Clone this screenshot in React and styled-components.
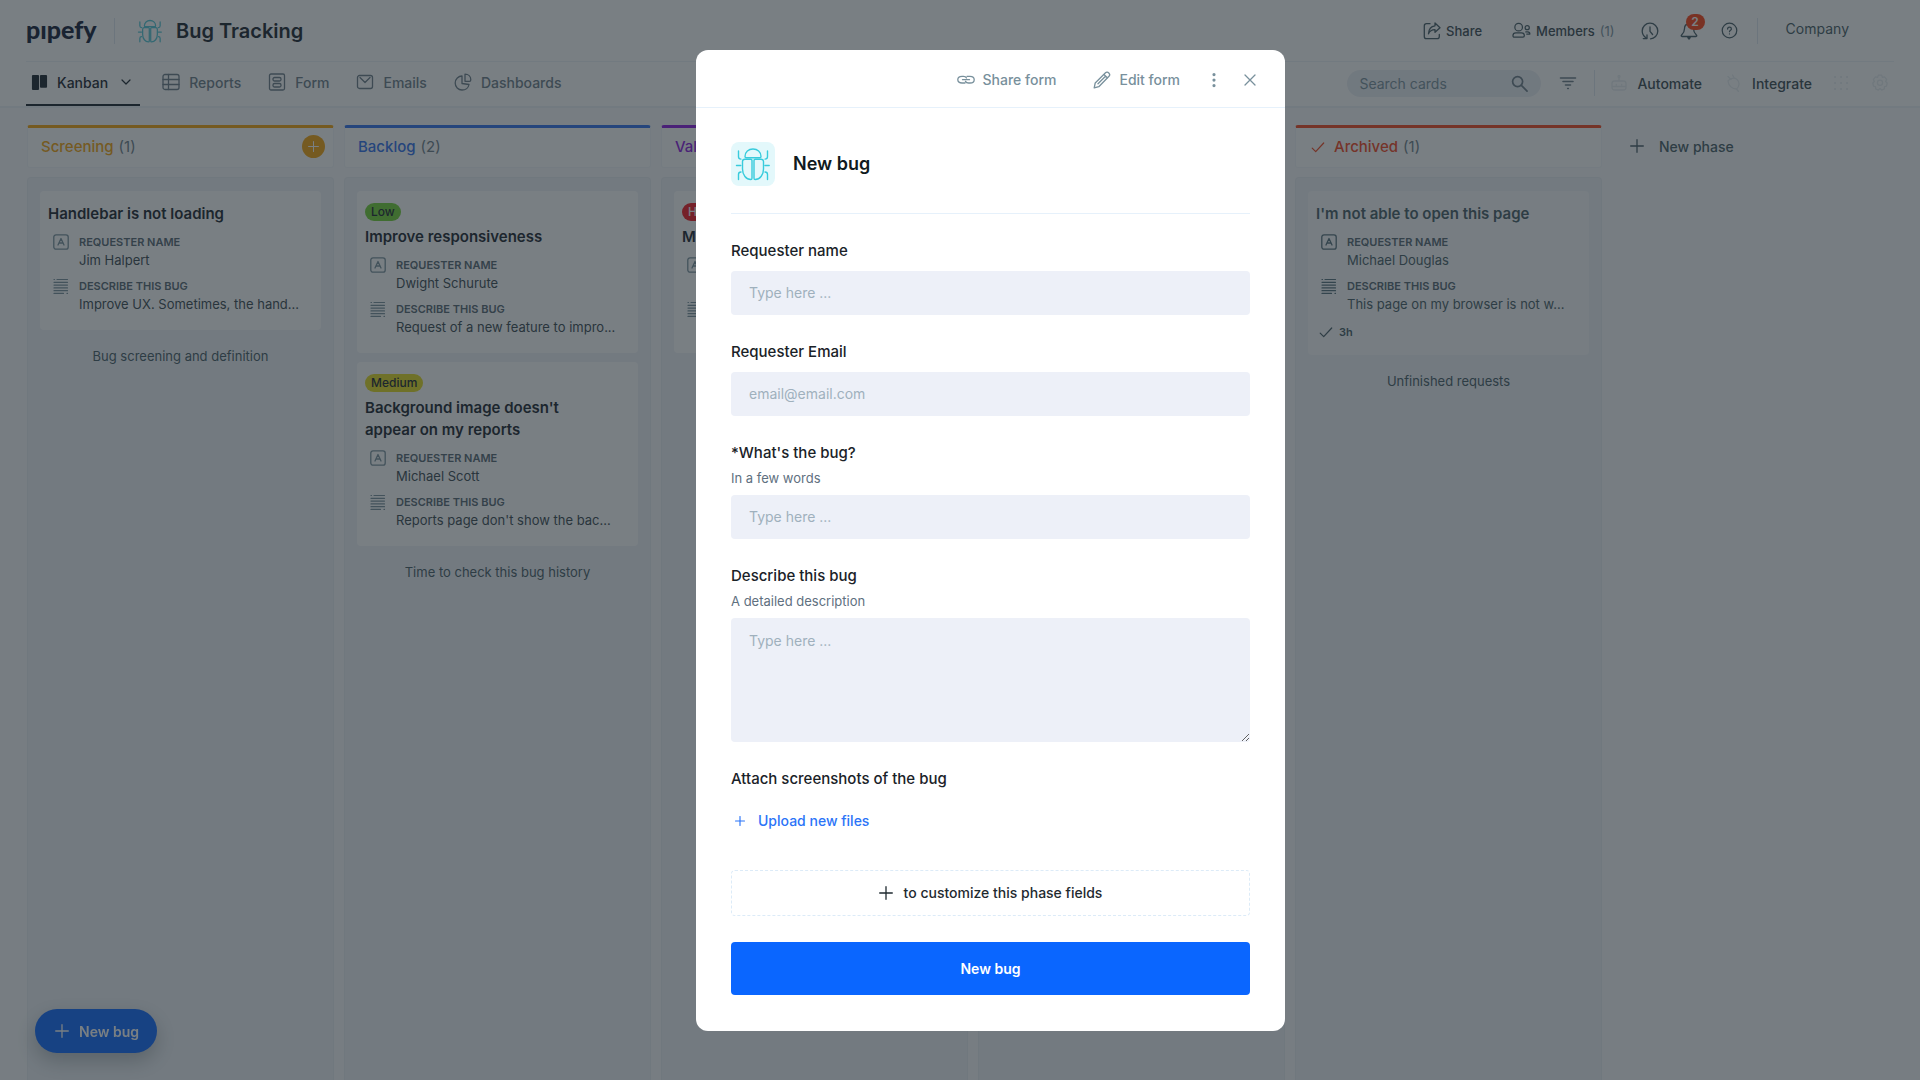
import React from 'react';
import styled, { createGlobalStyle, ThemeProvider } from 'styled-components';

const theme = {
    fontFamily: '"Inter", sans-serif',
    ink: '#17212b',
    text: '#37474f',
    slate: '#455a64',
    muted: '#6b7c88',
    line: '#eef3f8',
    blue: '#0a66ff'
};

const GlobalStyle = createGlobalStyle`
    * {
        box-sizing: border-box;
    }

    body {
        margin: 0;
        overflow: hidden;
        font-family: ${theme.fontFamily};
        color: ${theme.text};
        background: #fafbfd;
    }

    button, input, textarea {
        font-family: inherit;
        border: 0;
        margin: 0;
        padding: 0;
        background: none;
    }

    button {
        cursor: pointer;
        color: inherit;
    }
`;

/* icons */

const Svg = styled.svg`
    display: block;
    flex: none;
    fill: none;
    stroke: currentColor;
    stroke-linecap: round;
    stroke-linejoin: round;
`;

const Icon = ({ size = 18, box = 18, stroke = 1.3, children }) => (
    <Svg width={size} height={size} viewBox={`0 0 ${box} ${box}`} strokeWidth={stroke} aria-hidden="true">
        {children}
    </Svg>
);

const BugIcon = ({ size, stroke }) => (
    <Icon size={size} box={40} stroke={stroke}>
        <path d="M12 12.500c0-4.600 3.600-7.500 8-7.500s8 2.900 8 7.500c0 .9-.5 1.300-1.300 1.300H13.300c-.8 0-1.300-.4-1.300-1.300z" />
        <path d="M19 16.500c0-.8-.5-1.300-1.300-1.300h-5.900c-1.400 0-2.300.8-2.300 2.200v7.600c0 6 3.700 10.500 8.300 10.500.8 0 1.200-.5 1.200-1.300z" />
        <path d="M21 16.500c0-.8.5-1.300 1.300-1.300h5.900c1.400 0 2.300.8 2.300 2.200v7.600c0 6-3.700 10.500-8.300 10.500-.8 0-1.200-.5-1.200-1.300z" />
        <path d="M5.500 7v5.500c0 1.900.8 2.600 2.500 2.600M34.500 7v5.500c0 1.900-.8 2.600-2.500 2.600M3.500 21.500h4.300M36.200 21.500h-4.300M5.500 35.500v-4.900c0-1.900.8-2.600 2.500-2.600M34.500 35.500v-4.900c0-1.900-.8-2.600-2.500-2.600" />
    </Icon>
);

const PlusIcon = ({ size, stroke = 1.3 }) => (
    <Icon size={size} box={14} stroke={stroke}>
        <path d="M7 .7v12.600M.7 7h12.600" />
    </Icon>
);

const CheckIcon = () => (
    <Icon size={14} box={14} stroke={1.2}>
        <path d="M1.200 8.200l3.500 3.500L12.700 3" />
    </Icon>
);

const KanbanIcon = () => (
    <Icon size={17}>
        <rect x="1" y="1" width="7.500" height="16" rx="1" fill="currentColor" stroke="none" />
        <rect x="9.500" y="1" width="7.500" height="13.500" rx="1" fill="currentColor" stroke="none" />
    </Icon>
);

const ReportsIcon = () => (
    <Icon>
        <rect x="1" y="1.500" width="16" height="15" rx="2" />
        <path d="M6.500 1.500v15M1 6.500h16M1 11.500h16" />
    </Icon>
);

const FormIcon = () => (
    <Icon>
        <rect x="1.500" y="1" width="15" height="16" rx="1.500" />
        <rect x="5" y="4.500" width="8" height="3.500" rx="1.500" />
        <rect x="5" y="10.500" width="8" height="3.500" rx="1.500" />
    </Icon>
);

const MailIcon = () => (
    <Icon>
        <rect x="1.500" y="2.500" width="15" height="13" rx="2" />
        <path d="M4 4.500l5 5 5-5" />
    </Icon>
);

const PieIcon = () => (
    <Icon>
        <path d="M8 3C4.500 3 1.200 5.800 1.200 10c0 4 3 7 6.800 7 3.700 0 6.500-2.500 7-5.500L8 10.500z" />
        <path d="M11 8.300V1.200c3.300 0 5.800 2.300 5.800 5.500 0 1.100-.4 1.600-1.300 1.600z" />
    </Icon>
);

const ChevronIcon = () => (
    <Icon size={10} box={10} stroke={1.2}>
        <path d="M1 3l4 4 4-4" />
    </Icon>
);

const ShareIcon = () => (
    <Icon>
        <path d="M7 1.700H3.500c-1.300 0-2.200.9-2.200 2.200v10.600c0 1.300.9 2.200 2.200 2.200h10.600c1.300 0 2.200-.9 2.200-2.200v-2" />
        <path d="M12 1l5 4.700-5 4.600V7.700c-3.600 0-5.300 1.200-6.500 4.100.2-4.700 2.500-7.600 6.500-8z" />
    </Icon>
);

const MembersIcon = () => (
    <Icon size={19} box={20}>
        <circle cx="7" cy="6.500" r="4" />
        <path d="M1 15.500c0-1.900 1.200-3 3-3h6c1.800 0 3 1.100 3 3 0 1-.5 1.500-1.500 1.500h-9C1.500 17 1 16.500 1 15.500z" />
        <circle cx="16" cy="7" r="2.200" />
        <path d="M14.500 11.500h2c1.400 0 2.300.8 2.300 2.300h-3.300" />
    </Icon>
);

const ClockIcon = () => (
    <Icon>
        <path d="M5.500 16C3 14.700 1.200 12.200 1.200 9c0-4.300 3.500-7.800 7.800-7.800s7.800 3.500 7.800 7.800-3.500 7.800-7.300 7.800" />
        <path d="M6 13v3.600H2.300M9 5v4.300l2.600 3.200" />
    </Icon>
);

const BellIcon = () => (
    <Icon>
        <path d="M9 2c-2.800 0-4.500 2-4.500 4.700 0 3.600-1.500 5-3 6.500-.6.700-.3 1.300.5 1.300h14c.8 0 1.100-.6.500-1.300-1.500-1.500-3-2.900-3-6.500C13.500 4 11.800 2 9 2z" />
        <path d="M7.800 15.500h2.400L9 17z" fill="currentColor" />
    </Icon>
);

const HelpIcon = () => (
    <Icon size={17}>
        <circle cx="9" cy="9" r="7.700" />
        <path d="M7 7.500c0-1.200.9-2 2-2s2 .8 2 1.800c0 1.400-2 1.500-2 3M9 12.600v.1" />
    </Icon>
);

const SearchIcon = () => (
    <Icon size={17} stroke={1.8}>
        <circle cx="7" cy="7" r="5.300" />
        <path d="M11 11l6 6" />
    </Icon>
);

const FilterIcon = () => (
    <Icon stroke={1.6}>
        <path d="M1.500 4h15M4 7.500h10M6.500 11h5M8.700 14.500h.6" />
    </Icon>
);

const RobotIcon = () => (
    <Icon>
        <path d="M4.500 7h9c1.500 0 2.500 1 2.500 2.500v4c0 1.500-1 2.500-2.500 2.500h-9C3 16 2 15 2 13.500v-4C2 8 3 7 4.500 7zM9 7V3M6.300 10.500v.5M11.700 10.500v.5M2 12.500h14" />
        <circle cx="9" cy="2.500" r="1" />
    </Icon>
);

const PlugIcon = () => (
    <Icon>
        <path d="M3 2.500l3 3M7.500 1L9 3.500M3 7c2-2.500 6-4 9-1.500 3 2.600 2.600 7-.5 9.500C7.500 15 3.500 12 3 7zM11.500 15l2 2.500" />
    </Icon>
);

const DotsGridIcon = () => (
    <Icon stroke={2}>
        {[3, 9, 15].map(y => <path key={y} d={`M3 ${y}h.1M9 ${y}h.1M15 ${y}h.1`} />)}
    </Icon>
);

const GearIcon = () => (
    <Icon>
        <path d="M7.300 1.200h3.400l.6 2.200 2.200-.5 2.100 2.500-1 2.200 1.600 1.400-.7 3.200-2 .4-.2 2.300-2.600 1.200L9 14.600l-1.700 1.500-2.600-1.200-.2-2.300-2-.4-.7-3.200 1.600-1.400-1-2.200 2.100-2.500 2.200.5z" />
        <circle cx="9" cy="8.700" r="2.600" />
    </Icon>
);

const LinkIcon = () => (
    <Icon>
        <path d="M8 12H5C2.500 12 .8 10.800.8 8.700S2.500 5.300 5 5.300h1.500c1.500 0 2.500.7 3 1.700M10 5.300h3c2.500 0 4.200 1.300 4.200 3.400S15.500 12 13 12h-1.500c-1.500 0-2.500-.6-3-1.600M5.500 8.700h7" />
    </Icon>
);

const PencilIcon = () => (
    <Icon>
        <path d="M1.200 16.800l1-4.800L12.500 1.800c1-1 2.300-.8 3.300.2s1.200 2.300.2 3.300L5.800 15.700zM11 3.500L14.500 7M12.500 5.300L5 12.800" />
    </Icon>
);

const KebabIcon = () => (
    <Icon size={18} stroke={3.2}>
        <path d="M9 3.500v.1M9 9v.1M9 14.500v.1" />
    </Icon>
);

const CloseIcon = () => (
    <Icon size={12} box={12} stroke={1.3}>
        <path d="M1 1l10 10M11 1L1 11" />
    </Icon>
);

const LetterFieldIcon = () => (
    <Icon size={16} box={16} stroke={1.3}>
        <rect x=".8" y=".8" width="14.400" height="14.400" rx="2.200" />
        <path d="M5 11l3-6.500L11 11M6 9h4" />
    </Icon>
);

const TextFieldIcon = () => (
    <Icon size={16} box={16} stroke={1.2}>
        <path d="M1 1.500h.5M4 1.500h10.500M1 4.300h13.500M1 7.100h13.500M1 9.900h13.500M1 12.700h13.500M1 15.400h9.500M14 15.400h.5" />
    </Icon>
);

/* page header */

const Page = styled.div`
    display: flex;
    flex-direction: column;
    height: 100vh;
`;

const TopBar = styled.header`
    display: flex;
    align-items: center;
    height: 62px;
    margin: 0 26px;
    border-bottom: 1px solid ${props => props.theme.line};
    background: #fff;
`;

const HeaderArea = styled.div`
    background: #fff;
    border-bottom: 2px solid ${props => props.theme.line};
`;

const Logo = styled.a`
    width: 70px;
    font-family: Lato, sans-serif;
    font-weight: 900;
    font-size: 25px;
    line-height: 30px;
    color: #101935;
    text-decoration: none;
    margin-bottom: 4px;
`;

const Divider = styled.span`
    width: 1px;
    height: 26px;
    background: #dfe7ef;
    margin: 0 ${props => props.$after}px 0 ${props => props.$before}px;
`;

const PipeIcon = styled.span`
    color: #52c6d6;
    margin-right: 12px;
`;

const PipeTitle = styled.h1`
    margin: 0;
    font-size: 20px;
    line-height: 26px;
    font-weight: 600;
    color: ${props => props.theme.ink};
`;

const TopActions = styled.div`
    display: flex;
    align-items: center;
    margin-left: auto;
    color: ${props => props.theme.slate};
`;

const TopButton = styled.button`
    display: flex;
    align-items: center;
    gap: 5px;
    position: relative;
    font-size: 13px;
    line-height: 20px;
    font-weight: 500;
    color: ${props => props.theme.text};
    margin-right: ${props => props.$gap}px;

    svg {
        color: ${props => props.theme.slate};
    }
`;

const Count = styled.span`
    font-weight: 400;
    color: #78909c;
`;

const Badge = styled.span`
    position: absolute;
    top: -8px;
    left: 6px;
    width: 19px;
    height: 16px;
    border-radius: 8px;
    background: #ff4013;
    color: #fff;
    font-size: 12px;
    line-height: 16px;
    font-weight: 600;
    text-align: center;
`;

const Company = styled.span`
    font-size: 14px;
    line-height: 20px;
    padding-bottom: 4px;
    margin-right: 45px;
`;

const NavBar = styled.nav`
    display: flex;
    align-items: center;
    height: 44px;
    margin: 0 26px;
`;

const Tab = styled.a`
    display: flex;
    align-items: center;
    gap: 9px;
    height: 44px;
    padding: 0 ${props => (props.$active ? 9 : 0)}px 2px ${props => (props.$active ? 5 : 0)}px;
    margin-right: ${props => (props.$active ? 22 : 27)}px;
    border-bottom: 2px solid ${props => (props.$active ? props.theme.ink : 'transparent')};
    font-size: 14px;
    font-weight: 500;
    text-decoration: none;
    color: ${props => (props.$active ? props.theme.ink : props.theme.muted)};
`;

const ChevronWrap = styled.span`
    margin-left: 4px;
`;

const SearchBox = styled.label`
    display: flex;
    align-items: center;
    width: 194px;
    height: 27px;
    padding: 0 13px 0 12px;
    border-radius: 14px;
    background: #eceff5;
    color: ${props => props.theme.muted};
    margin-right: 18px;
`;

const SearchInput = styled.input`
    flex: 1;
    min-width: 0;
    font-size: 14px;
    outline: none;

    &::placeholder {
        color: #78909c;
        opacity: 1;
    }
`;

const NavTools = styled.div`
    display: flex;
    align-items: center;
    margin-left: auto;
    padding-bottom: 2px;
    color: ${props => props.theme.muted};
`;

const NavButton = styled.button`
    display: flex;
    align-items: center;
    gap: 9px;
    font-size: 14px;
    font-weight: 500;
    color: ${props => props.theme.text};
    margin-right: ${props => props.$gap}px;

    svg {
        color: ${props => (props.$faint ? '#e9edf1' : props.theme.muted)};
    }
`;

/* board */

const Board = styled.main`
    flex: 1;
    min-height: 0;
    display: flex;
    gap: 10px;
    padding: 17px 27px 0;
`;

const Column = styled.section`
    flex: none;
    width: 307px;
    display: flex;
    flex-direction: column;
    gap: 9px;
`;

const ColumnHead = styled.div`
    display: flex;
    align-items: center;
    gap: 5px;
    height: 43px;
    padding: 0 8px 2px 13px;
    border: 1px solid #f3f6f9;
    border-top: 3px solid ${props => props.$color};
    border-radius: 3px;
    background: #fff;
    color: ${props => props.$color};
    font-size: 15px;
`;

const ColumnName = styled.h2`
    margin: 0;
    font-size: inherit;
    font-weight: 500;
`;

const ColumnCount = styled.span`
    color: ${props => props.theme.muted};
`;

const CheckWrap = styled.span`
    margin: 0 4px 0 2px;
`;

const AddButton = styled.button`
    display: flex;
    align-items: center;
    justify-content: center;
    width: 23px;
    height: 23px;
    margin-left: auto;
    border-radius: 50%;
    background: ${props => props.$color};
    color: #fff;
`;

const ColumnBody = styled.div`
    flex: 1;
    padding: 13px 12px;
    border: 1px solid #e9edf2;
    border-bottom: 0;
    border-radius: 4px 4px 0 0;
    background: #f0f3f8;
`;

const Card = styled.article`
    padding: 12px 20px ${props => (props.$done ? 14 : 17)}px 8px;
    margin-bottom: 9px;
    border-radius: 4px;
    background: ${props => (props.$done ? '#f9fafc' : '#fff')};
    color: ${props => (props.$done ? props.theme.slate : props.theme.text)};
`;

const Tag = styled.span`
    display: block;
    width: fit-content;
    padding: 0 6px;
    margin-bottom: 5px;
    border-radius: 9px;
    background: ${props => props.$color};
    color: ${props => props.$ink || props.theme.ink};
    font-size: 12px;
    line-height: 18px;
    font-weight: 500;
`;

const CardTitle = styled.h3`
    margin: 0 0 8px;
    padding-right: 20px;
    font-size: 15px;
    line-height: 22px;
    font-weight: 600;
    color: ${props => (props.$done ? props.theme.slate : props.theme.ink)};
`;

const CardField = styled.div`
    display: flex;
    gap: 10px;
    padding-left: 5px;

    & + & {
        margin-top: 8px;
    }

    svg {
        margin-top: 1px;
        color: ${props => (props.$done ? '#546e7a' : '#78909c')};
    }
`;

const FieldText = styled.div`
    min-width: 0;
    line-height: 18px;
`;

const FieldLabel = styled.div`
    font-size: 11px;
    font-weight: 600;
    color: #546570;
`;

const FieldValue = styled.div`
    font-size: 13px;
    white-space: nowrap;
`;

const CardDone = styled.div`
    display: flex;
    align-items: center;
    gap: 6px;
    margin-top: 10px;
    padding-left: 3px;
    font-size: 11px;
    line-height: 18px;
    font-weight: 600;
`;

const Caption = styled.p`
    margin: 17px 0 0;
    font-size: 13px;
    line-height: 18px;
    text-align: center;
    white-space: nowrap;
    color: ${props => props.theme.slate};
`;

const NewPhase = styled.button`
    display: flex;
    align-items: center;
    align-self: flex-start;
    gap: 15px;
    height: 42px;
    margin-left: 18px;
    font-size: 14px;
    font-weight: 500;
    white-space: nowrap;
    color: ${props => props.theme.slate};
`;

const FloatingButton = styled.button`
    position: fixed;
    left: 35px;
    bottom: 27px;
    display: flex;
    align-items: center;
    gap: 10px;
    height: 44px;
    padding: 0 18px 0 20px;
    border-radius: 22px;
    background: ${props => props.theme.blue};
    box-shadow: 0 8px 20px rgba(38, 50, 56, 0.3);
    color: #fff;
    font-size: 14px;
    font-weight: 600;
`;

/* start form modal */

const Overlay = styled.div`
    position: fixed;
    inset: 0;
    display: flex;
    align-items: center;
    justify-content: center;
    padding-left: 61px;
    background: rgba(32, 42, 48, 0.6);
`;

const Modal = styled.div`
    width: 589px;
    border-radius: 12px;
    background: #fff;
`;

const ModalHeader = styled.div`
    display: flex;
    align-items: center;
    justify-content: flex-end;
    height: 58px;
    padding: 4px 29px 0;
    border-bottom: 1px solid #e6f1fb;
`;

const ModalAction = styled.button`
    display: flex;
    align-items: center;
    gap: 8px;
    margin-right: ${props => props.$gap || 0}px;
    font-size: 14px;
    line-height: 20px;
    font-weight: 500;
    color: #78909c;
`;

const ModalBody = styled.form`
    display: flex;
    flex-direction: column;
    padding: 0 35px 36px;
`;

const ModalTitle = styled.div`
    display: flex;
    align-items: center;
    gap: 18px;
    padding: 34px 0 27px;
    border-bottom: 1px solid #e6f1fb;

    h2 {
        margin: 0;
        font-size: 18px;
        font-weight: 600;
        color: #101a20;
    }
`;

const BugTile = styled.span`
    display: flex;
    align-items: center;
    justify-content: center;
    width: 44px;
    height: 44px;
    border-radius: 8px;
    background: #e3f8fb;
    color: #38cbdc;
`;

const Field = styled.div`
    display: flex;
    flex-direction: column;
    padding-top: 26px;
`;

const Label = styled.label`
    font-size: 15px;
    line-height: 22px;
    font-weight: 500;
    color: #1a2228;
`;

const Help = styled.span`
    margin-top: 5px;
    font-size: 13px;
    line-height: 18px;
    color: #607080;
`;

const TextInput = styled.input`
    height: 44px;
    margin-top: ${props => (props.$help ? 8 : 9)}px;
    padding: 0 18px;
    border-radius: 4px;
    background: #edf0f8;
    font-size: 14px;

    &::placeholder {
        color: #9fb0bd;
        opacity: 1;
    }
`;

const TextArea = styled(TextInput).attrs({ as: 'textarea' })`
    height: 124px;
    padding: 12px 18px;
    line-height: 22px;
    resize: vertical;
`;

const UploadButton = styled.button`
    display: flex;
    align-items: center;
    align-self: flex-start;
    gap: 13px;
    margin-top: 20px;
    padding-left: 4px;
    font-size: 14px;
    line-height: 22px;
    font-weight: 500;
    color: #2b74f8;
`;

const CustomizeButton = styled.button`
    display: flex;
    align-items: center;
    justify-content: center;
    gap: 11px;
    height: 46px;
    margin-top: 38px;
    border: 1px dashed #dcebf8;
    border-radius: 4px;
    font-size: 14px;
    font-weight: 500;
    color: #1f2a30;
`;

const SubmitButton = styled.button`
    height: 53px;
    margin-top: 26px;
    border-radius: 4px;
    background: ${props => props.theme.blue};
    color: #fff;
    font-size: 14px;
    font-weight: 600;
`;

const columns = [
    {
        name: 'Screening',
        count: 1,
        color: '#f5a30a',
        addable: true,
        caption: 'Bug screening and definition',
        cards: [
            { title: 'Handlebar is not loading', requester: 'Jim Halpert', description: 'Improve UX. Sometimes, the hand...' }
        ]
    },
    {
        name: 'Backlog',
        count: 2,
        color: '#2f6fed',
        caption: 'Time to check this bug history',
        cards: [
            {
                tag: { text: 'Low', color: '#72d334' },
                title: 'Improve responsiveness',
                requester: 'Dwight Schurute',
                description: 'Request of a new feature to impro...'
            },
            {
                tag: { text: 'Medium', color: '#e6dc1e' },
                title: "Background image doesn't appear on my reports",
                requester: 'Michael Scott',
                description: "Reports page don't show the bac..."
            }
        ]
    },
    {
        name: 'Validation',
        count: 1,
        color: '#8b14e0',
        caption: 'Before working, validate this request',
        cards: [
            { tag: { text: 'High', color: '#f5141e', ink: '#fff' }, title: 'Menu', requester: 'Pam Beesly', description: 'Menu is not opening' }
        ]
    },
    { name: 'Doing', count: 0, color: '#14b8a6', cards: [] },
    {
        name: 'Archived',
        count: 1,
        color: '#f5441c',
        done: true,
        caption: 'Unfinished requests',
        cards: [
            { title: "I'm not able to open this page", requester: 'Michael Douglas', description: 'This page on my browser is not w...', age: '3h' }
        ]
    }
];

const tabs = [
    { name: 'Reports', icon: <ReportsIcon /> },
    { name: 'Form', icon: <FormIcon /> },
    { name: 'Emails', icon: <MailIcon /> },
    { name: 'Dashboards', icon: <PieIcon /> }
];

const BoardCard = ({ card, done }) => (
    <Card $done={done}>
        {card.tag && <Tag $color={card.tag.color} $ink={card.tag.ink}>{card.tag.text}</Tag>}
        <CardTitle $done={done}>{card.title}</CardTitle>
        <CardField $done={done}>
            <LetterFieldIcon />
            <FieldText>
                <FieldLabel>REQUESTER NAME</FieldLabel>
                <FieldValue>{card.requester}</FieldValue>
            </FieldText>
        </CardField>
        <CardField $done={done}>
            <TextFieldIcon />
            <FieldText>
                <FieldLabel>DESCRIBE THIS BUG</FieldLabel>
                <FieldValue>{card.description}</FieldValue>
            </FieldText>
        </CardField>
        {card.age && <CardDone><CheckIcon />{card.age}</CardDone>}
    </Card>
);

const BoardColumn = ({ column }) => (
    <Column>
        <ColumnHead $color={column.color}>
            {column.done && <CheckWrap><CheckIcon /></CheckWrap>}
            <ColumnName>{column.name}</ColumnName>
            <ColumnCount>({column.count})</ColumnCount>
            {column.addable && (
                <AddButton $color={column.color} aria-label="Add card">
                    <PlusIcon size={11} />
                </AddButton>
            )}
        </ColumnHead>
        <ColumnBody>
            {column.cards.map(card => <BoardCard key={card.title} card={card} done={column.done} />)}
            {column.caption && <Caption>{column.caption}</Caption>}
        </ColumnBody>
    </Column>
);

const Header = () => (
    <HeaderArea>
        <TopBar>
            <Logo href="#" aria-label="Pipefy">pıpefy</Logo>
            <Divider $before={18} $after={21} />
            <PipeIcon><BugIcon size={28} stroke={1.8} /></PipeIcon>
            <PipeTitle>Bug Tracking</PipeTitle>
            <TopActions>
                <TopButton $gap={30}><ShareIcon />Share</TopButton>
                <TopButton $gap={26}><MembersIcon />Members <Count>(1)</Count></TopButton>
                <TopButton $gap={21} aria-label="Activity"><ClockIcon /></TopButton>
                <TopButton $gap={23} aria-label="Notifications"><BellIcon /><Badge>2</Badge></TopButton>
                <TopButton $gap={0} aria-label="Help"><HelpIcon /></TopButton>
                <Divider $before={19} $after={28} />
                <Company>Company</Company>
            </TopActions>
        </TopBar>
        <NavBar>
            <Tab href="#" $active>
                <KanbanIcon />
                Kanban
                <ChevronWrap><ChevronIcon /></ChevronWrap>
            </Tab>
            {tabs.map(tab => <Tab key={tab.name} href="#">{tab.icon}{tab.name}</Tab>)}
            <NavTools>
                <SearchBox>
                    <SearchInput type="search" placeholder="Search cards" aria-label="Search cards" />
                    <SearchIcon />
                </SearchBox>
                <NavButton $gap={0} aria-label="Filter"><FilterIcon /></NavButton>
                <Divider $before={17} $after={15} />
                <NavButton $gap={23} $faint><RobotIcon />Automate</NavButton>
                <NavButton $gap={20} $faint><PlugIcon />Integrate</NavButton>
                <NavButton $gap={21} $faint aria-label="Apps"><DotsGridIcon /></NavButton>
                <NavButton $gap={5} $faint aria-label="Settings"><GearIcon /></NavButton>
            </NavTools>
        </NavBar>
    </HeaderArea>
);

const StartForm = () => (
    <Modal role="dialog" aria-label="New bug">
        <ModalHeader>
            <ModalAction $gap={37}><LinkIcon />Share form</ModalAction>
            <ModalAction $gap={25}><PencilIcon />Edit form</ModalAction>
            <ModalAction $gap={21} aria-label="More options"><KebabIcon /></ModalAction>
            <ModalAction aria-label="Close"><CloseIcon /></ModalAction>
        </ModalHeader>
        <ModalBody>
            <ModalTitle>
                <BugTile><BugIcon size={40} stroke={1.4} /></BugTile>
                <h2>New bug</h2>
            </ModalTitle>
            <Field>
                <Label htmlFor="requester">Requester name</Label>
                <TextInput id="requester" placeholder="Type here ..." />
            </Field>
            <Field>
                <Label htmlFor="email">Requester Email</Label>
                <TextInput id="email" type="email" placeholder="email@email.com" />
            </Field>
            <Field>
                <Label htmlFor="what">*What's the bug?</Label>
                <Help>In a few words</Help>
                <TextInput id="what" $help placeholder="Type here ..." />
            </Field>
            <Field>
                <Label htmlFor="describe">Describe this bug</Label>
                <Help>A detailed description</Help>
                <TextArea id="describe" $help placeholder="Type here ..." />
            </Field>
            <Field>
                <Label as="span">Attach screenshots of the bug</Label>
                <UploadButton type="button"><PlusIcon size={10} stroke={1.6} />Upload new files</UploadButton>
            </Field>
            <CustomizeButton type="button"><PlusIcon size={14} />to customize this phase fields</CustomizeButton>
            <SubmitButton type="button">New bug</SubmitButton>
        </ModalBody>
    </Modal>
);

const App = () => (
    <ThemeProvider theme={theme}>
        <GlobalStyle />
        <Page>
            <Header />
            <Board>
                {columns.map(column => <BoardColumn key={column.name} column={column} />)}
                <NewPhase><PlusIcon size={14} />New phase</NewPhase>
            </Board>
        </Page>
        <FloatingButton><PlusIcon size={14} />New bug</FloatingButton>
        <Overlay>
            <StartForm />
        </Overlay>
    </ThemeProvider>
);

export default App;
